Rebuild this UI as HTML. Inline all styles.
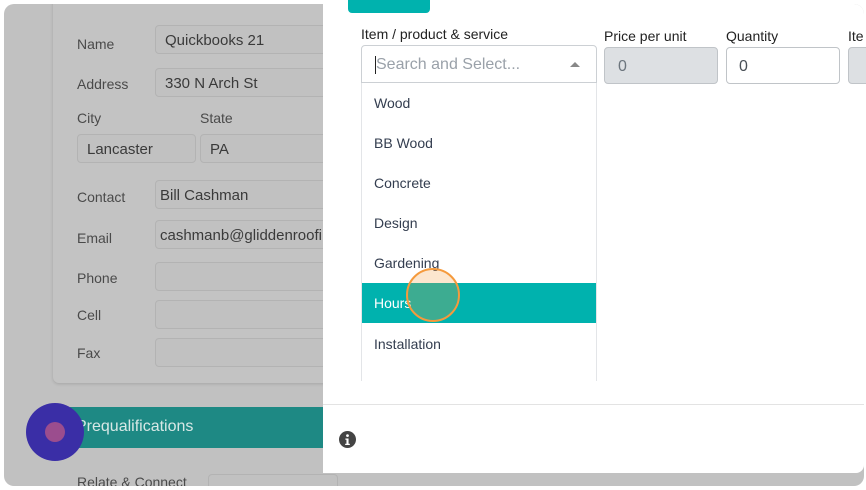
<!DOCTYPE html>
<html><head><style>
*{box-sizing:border-box;margin:0;padding:0}
body{width:866px;height:490px;background:#fff;position:relative;overflow:hidden;font-family:"Liberation Sans",sans-serif;}
.frame{position:absolute;left:4px;top:4px;width:860px;height:482px;background:#c1c1c1;border-radius:10px;overflow:hidden}
.a{position:absolute}
.card{left:49px;top:-10px;width:300px;height:389px;background:#c3c3c3;border-radius:6px;box-shadow:0 1px 3px rgba(0,0,0,.15)}
.lbl{position:absolute;font-size:14px;color:#4a4a4a}
.in{position:absolute;border:1px solid #b3b3b3;border-radius:4px;background:#c1c1c1;font-size:15px;color:#3a3a3a;padding-left:9px;line-height:29px;height:29px}
.modal{left:319px;top:-4px;width:541px;height:473px;background:#fff;border-radius:0 0 8px 0}
.m{position:absolute;font-size:14px;color:#222}
.opt{position:absolute;left:374px;font-size:14px;color:#333d4f}
</style></head><body>
<div class="frame">
 <div class="a card"></div>
 <div class="lbl" style="left:73px;top:32px">Name</div>
 <div class="in" style="left:151px;top:21px;width:180px">Quickbooks 21</div>
 <div class="lbl" style="left:73px;top:72px">Address</div>
 <div class="in" style="left:151px;top:64px;width:180px">330 N Arch St</div>
 <div class="lbl" style="left:73px;top:106px">City</div>
 <div class="lbl" style="left:196px;top:106px">State</div>
 <div class="in" style="left:73px;top:130px;width:119px">Lancaster</div>
 <div class="in" style="left:196px;top:130px;width:140px">PA</div>
 <div class="lbl" style="left:73px;top:185px">Contact</div>
 <div class="in" style="left:151px;top:176px;width:180px;padding-left:4px">Bill Cashman</div>
 <div class="lbl" style="left:73px;top:226px">Email</div>
 <div class="in" style="left:151px;top:216px;width:180px;padding-left:4px;white-space:nowrap;overflow:hidden">cashmanb@gliddenroofing</div>
 <div class="lbl" style="left:73px;top:266px">Phone</div>
 <div class="in" style="left:151px;top:258px;width:180px"></div>
 <div class="lbl" style="left:73px;top:303px">Cell</div>
 <div class="in" style="left:151px;top:296px;width:180px"></div>
 <div class="lbl" style="left:73px;top:341px">Fax</div>
 <div class="in" style="left:151px;top:334px;width:180px"></div>
 <div class="a" style="left:66px;top:403px;width:260px;height:41px;background:#1e8984"></div>
 <div class="a" style="left:72px;top:414px;font-size:16px;color:#d8e8e6">Prequalifications</div>
 <div class="lbl" style="left:73px;top:470px">Relate &amp; Connect</div>
 <div class="in" style="left:204px;top:470px;width:130px"></div>
 <div class="a" style="left:22px;top:399px;width:58px;height:58px;border-radius:50%;background:#3a2ea6"></div>
 <div class="a" style="left:41px;top:418px;width:20px;height:20px;border-radius:50%;background:#9b4d8e"></div>
 <div class="a modal"></div>
</div>
<div class="a" style="left:348px;top:0;width:82px;height:13px;background:#00b2ae;border-radius:0 0 4px 4px"></div>
<div class="m" style="left:361px;top:26px">Item / product &amp; service</div>
<div class="m" style="left:604px;top:28px">Price per unit</div>
<div class="m" style="left:726px;top:28px">Quantity</div>
<div class="m" style="left:848px;top:28px">Ite</div>
<div class="a" style="left:361px;top:45px;width:236px;height:38px;border:1px solid #ccd0d4;border-radius:4px 4px 0 0"></div>
<div class="a" style="left:375px;top:56px;width:1px;height:18px;background:#222"></div>
<div class="a" style="left:376px;top:56px;font-size:16px;color:#9aa1a9">Search and Select...</div>
<div class="a" style="left:570px;top:62px;width:0;height:0;border-left:5px solid transparent;border-right:5px solid transparent;border-bottom:5px solid #888"></div>
<div class="a" style="left:361px;top:83px;width:236px;height:298px;border-left:1px solid #e3e5e8;border-right:1px solid #e3e5e8"></div>
<div class="a" style="left:604px;top:47px;width:114px;height:37px;background:#dde0e3;border:1px solid #c0c4c8;border-radius:4px;font-size:16px;color:#6c757d;padding:10px 0 0 13px">0</div>
<div class="a" style="left:726px;top:47px;width:114px;height:37px;background:#fff;border:1px solid #c0c4c8;border-radius:4px;font-size:16px;color:#495057;padding:10px 0 0 12px">0</div>
<div class="a" style="left:848px;top:47px;width:30px;height:37px;background:#dde0e3;border:1px solid #c0c4c8;border-radius:4px"></div>
<div class="opt" style="top:95px">Wood</div>
<div class="opt" style="top:135px">BB Wood</div>
<div class="opt" style="top:175px">Concrete</div>
<div class="opt" style="top:215px">Design</div>
<div class="opt" style="top:255px">Gardening</div>
<div class="a" style="left:362px;top:283px;width:234px;height:40px;background:#00b2ae"></div>
<div class="opt" style="top:295px;color:#fff">Hours</div>
<div class="opt" style="top:336px">Installation</div>
<div class="a" style="left:406px;top:268px;width:54px;height:54px;border-radius:50%;border:2px solid #f59a3c;background:rgba(245,154,60,.25)"></div>
<div class="a" style="left:323px;top:404px;width:541px;height:1px;background:#e3e3e3"></div>
<svg class="a" style="left:339px;top:431px" width="17" height="17" viewBox="0 0 16 16"><circle cx="8" cy="8" r="8" fill="#444"/><circle cx="8" cy="4.3" r="1.3" fill="#fff"/><path d="M6 7h3v5h1.2v1.2H5.8V12H7V8.2H6z" fill="#fff"/></svg>
</body></html>
